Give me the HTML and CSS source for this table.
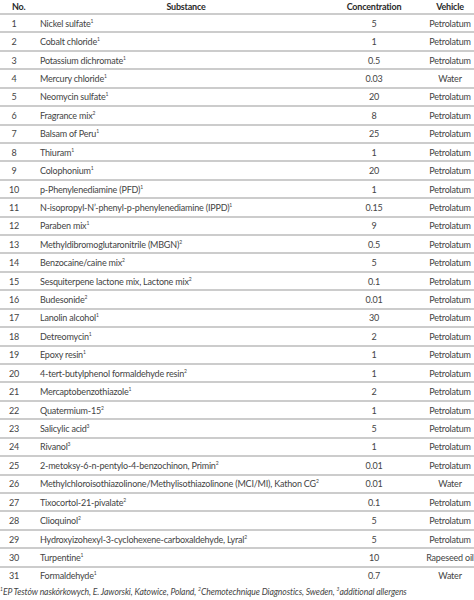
FILE: index.html
```html
<!DOCTYPE html>
<html>
<head>
<meta charset="utf-8">
<link rel="stylesheet" href="styles.css">
</head>
<body>
<div class="table">
  <div class="row head">
    <div class="no">No.</div>
    <div class="sub">Substance</div>
    <div class="conc">Concentration</div>
    <div class="veh">Vehicle</div>
  </div>
  <div class="row"><div class="no">1</div><div class="sub">Nickel sulfate<sup>1</sup></div><div class="conc">5</div><div class="veh">Petrolatum</div></div>
  <div class="row"><div class="no">2</div><div class="sub">Cobalt chloride<sup>1</sup></div><div class="conc">1</div><div class="veh">Petrolatum</div></div>
  <div class="row"><div class="no">3</div><div class="sub">Potassium dichromate<sup>1</sup></div><div class="conc">0.5</div><div class="veh">Petrolatum</div></div>
  <div class="row"><div class="no">4</div><div class="sub">Mercury chloride<sup>1</sup></div><div class="conc">0.03</div><div class="veh">Water</div></div>
  <div class="row"><div class="no">5</div><div class="sub">Neomycin sulfate<sup>1</sup></div><div class="conc">20</div><div class="veh">Petrolatum</div></div>
  <div class="row"><div class="no">6</div><div class="sub">Fragrance mix<sup>2</sup></div><div class="conc">8</div><div class="veh">Petrolatum</div></div>
  <div class="row"><div class="no">7</div><div class="sub">Balsam of Peru<sup>1</sup></div><div class="conc">25</div><div class="veh">Petrolatum</div></div>
  <div class="row"><div class="no">8</div><div class="sub">Thiuram<sup>1</sup></div><div class="conc">1</div><div class="veh">Petrolatum</div></div>
  <div class="row"><div class="no">9</div><div class="sub">Colophonium<sup>1</sup></div><div class="conc">20</div><div class="veh">Petrolatum</div></div>
  <div class="row"><div class="no">10</div><div class="sub">p-Phenylenediamine (PFD)<sup>1</sup></div><div class="conc">1</div><div class="veh">Petrolatum</div></div>
  <div class="row"><div class="no">11</div><div class="sub">N-isopropyl-N’-phenyl-p-phenylenediamine (IPPD)<sup>1</sup></div><div class="conc">0.15</div><div class="veh">Petrolatum</div></div>
  <div class="row"><div class="no">12</div><div class="sub">Paraben mix<sup>1</sup></div><div class="conc">9</div><div class="veh">Petrolatum</div></div>
  <div class="row"><div class="no">13</div><div class="sub">Methyldibromoglutaronitrile (MBGN)<sup>2</sup></div><div class="conc">0.5</div><div class="veh">Petrolatum</div></div>
  <div class="row"><div class="no">14</div><div class="sub">Benzocaine/caine mix<sup>2</sup></div><div class="conc">5</div><div class="veh">Petrolatum</div></div>
  <div class="row"><div class="no">15</div><div class="sub">Sesquiterpene lactone mix, Lactone mix<sup>2</sup></div><div class="conc">0.1</div><div class="veh">Petrolatum</div></div>
  <div class="row"><div class="no">16</div><div class="sub">Budesonide<sup>2</sup></div><div class="conc">0.01</div><div class="veh">Petrolatum</div></div>
  <div class="row"><div class="no">17</div><div class="sub">Lanolin alcohol<sup>1</sup></div><div class="conc">30</div><div class="veh">Petrolatum</div></div>
  <div class="row"><div class="no">18</div><div class="sub">Detreomycin<sup>1</sup></div><div class="conc">2</div><div class="veh">Petrolatum</div></div>
  <div class="row"><div class="no">19</div><div class="sub">Epoxy resin<sup>1</sup></div><div class="conc">1</div><div class="veh">Petrolatum</div></div>
  <div class="row"><div class="no">20</div><div class="sub">4-tert-butylphenol formaldehyde resin<sup>2</sup></div><div class="conc">1</div><div class="veh">Petrolatum</div></div>
  <div class="row"><div class="no">21</div><div class="sub">Mercaptobenzothiazole<sup>1</sup></div><div class="conc">2</div><div class="veh">Petrolatum</div></div>
  <div class="row"><div class="no">22</div><div class="sub">Quatermium-15<sup>2</sup></div><div class="conc">1</div><div class="veh">Petrolatum</div></div>
  <div class="row"><div class="no">23</div><div class="sub">Salicylic acid<sup>3</sup></div><div class="conc">5</div><div class="veh">Petrolatum</div></div>
  <div class="row"><div class="no">24</div><div class="sub">Rivanol<sup>3</sup></div><div class="conc">1</div><div class="veh">Petrolatum</div></div>
  <div class="row"><div class="no">25</div><div class="sub">2-metoksy-6-n-pentylo-4-benzochinon, Primin<sup>2</sup></div><div class="conc">0.01</div><div class="veh">Petrolatum</div></div>
  <div class="row"><div class="no">26</div><div class="sub">Methylchloroisothiazolinone/Methylisothiazolinone (MCI/MI), Kathon CG<sup>2</sup></div><div class="conc">0.01</div><div class="veh">Water</div></div>
  <div class="row"><div class="no">27</div><div class="sub">Tixocortol-21-pivalate<sup>2</sup></div><div class="conc">0.1</div><div class="veh">Petrolatum</div></div>
  <div class="row"><div class="no">28</div><div class="sub">Clioquinol<sup>2</sup></div><div class="conc">5</div><div class="veh">Petrolatum</div></div>
  <div class="row"><div class="no">29</div><div class="sub">Hydroxyizohexyl-3-cyclohexene-carboxaldehyde, Lyral<sup>2</sup></div><div class="conc">5</div><div class="veh">Petrolatum</div></div>
  <div class="row"><div class="no">30</div><div class="sub">Turpentine<sup>1</sup></div><div class="conc">10</div><div class="veh">Rapeseed oil</div></div>
  <div class="row"><div class="no">31</div><div class="sub">Formaldehyde<sup>1</sup></div><div class="conc">0.7</div><div class="veh">Water</div></div>
</div>
<p class="note"><sup>1</sup>EP Testów naskórkowych, E. Jaworski, Katowice, Poland, <sup>2</sup>Chemotechnique Diagnostics, Sweden, <sup>3</sup>additional allergens</p>
</body>
</html>
```

FILE: styles.css
```css
html, body {
  margin: 0;
  padding: 0;
  background: #ffffff;
}
body {
  font-family: Lato, "Liberation Sans", sans-serif;
  font-size: 9px;
  letter-spacing: -0.2px;
  color: #444444;
  width: 474px;
  overflow: hidden;
}
.table {
  display: flex;
  flex-direction: column;
}
.row {
  display: grid;
  grid-template-columns: 28px 316px 60px 22px 48px;
  align-items: center;
  height: 16.43px;
  border-top: 2px solid #cccccc;
  white-space: nowrap;
}
.row.head {
  border-top: none;
  height: 13px;
  font-weight: 700;
  color: #2a2a2a;
}
.no {
  text-align: center;
}
.head .no {
  text-align: left;
  padding-left: 12px;
}
.sub {
  padding-left: 12px;
}
.head .sub {
  padding-left: 0;
  text-align: center;
}
.conc {
  text-align: center;
}
.veh {
  grid-column: 5;
  justify-self: center;
  text-align: center;
}
sup {
  font-size: 5px;
  vertical-align: 4px;
  line-height: 0;
  letter-spacing: 0;
}
.note {
  margin: 3px 0 0 0;
  font-style: italic;
  font-size: 8.6px;
  letter-spacing: -0.1px;
  white-space: nowrap;
}
.note sup {
  font-size: 5px;
}
```
